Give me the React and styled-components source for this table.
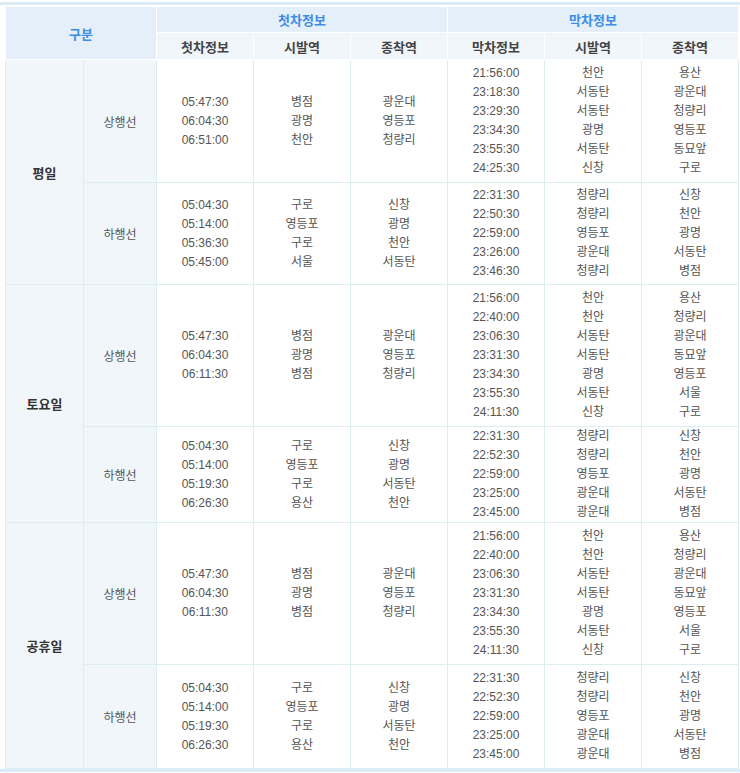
import React from 'react'
import styled, { createGlobalStyle } from 'styled-components'

const GlobalStyle = createGlobalStyle`
  html, body {
    margin: 0;
    padding: 0;
    background: #ffffff;
  }
  body {
    font-family: 'Liberation Sans', 'Noto Sans CJK KR', sans-serif;
    font-size: 12px;
    color: #555555;
  }
`

const Frame = styled.div`
  width: 740px;
  margin-top: 2px;
  border-top: 3px solid #dcebf8;
  border-bottom: 3px solid #dcebf8;
  padding: 1px 1px 0 5px;
  box-sizing: border-box;
`

const Table = styled.table`
  width: 734px;
  border-collapse: collapse;
  table-layout: fixed;
`

const Col = styled.col`
  width: ${props => props.$w}px;
`

const GroupHead = styled.th`
  height: 25px;
  padding: 0;
  border: 1px solid #ffffff;
  background: #e4effa;
  color: #3d8de4;
  font-size: 13px;
  font-weight: bold;
  text-align: center;
`

const SubHead = styled.th`
  height: 26px;
  padding: 0;
  border: 1px solid #ffffff;
  background: #f1f6fa;
  color: #444444;
  font-size: 13px;
  font-weight: bold;
  text-align: center;
`

const DayCell = styled.td`
  padding: 0;
  border: 1px solid #dceef0;
  background: #f0f6fa;
  color: #333333;
  font-size: 13px;
  font-weight: bold;
  text-align: center;
  vertical-align: middle;
`

const DirCell = styled.td`
  height: ${props => props.$h}px;
  padding: 0;
  border: 1px solid #dceef0;
  background: #f0f6fa;
  color: #555555;
  text-align: center;
  vertical-align: middle;
`

const DataCell = styled.td`
  padding: 0;
  border: 1px solid #dceef0;
  background: #ffffff;
  color: #555555;
  text-align: center;
  vertical-align: middle;
  line-height: 19px;
`

const Line = styled.div`
  height: 19px;
  white-space: nowrap;
`

const columnWidths = [78, 73, 97, 97, 97, 97, 97, 97]

const weekdayUpLast = [
  ['21:56:00', '천안', '용산'],
  ['23:18:30', '서동탄', '광운대'],
  ['23:29:30', '서동탄', '청량리'],
  ['23:34:30', '광명', '영등포'],
  ['23:55:30', '서동탄', '동묘앞'],
  ['24:25:30', '신창', '구로']
]

const holidayUpLast = [
  ['21:56:00', '천안', '용산'],
  ['22:40:00', '천안', '청량리'],
  ['23:06:30', '서동탄', '광운대'],
  ['23:31:30', '서동탄', '동묘앞'],
  ['23:34:30', '광명', '영등포'],
  ['23:55:30', '서동탄', '서울'],
  ['24:11:30', '신창', '구로']
]

const upFirst = [
  ['05:47:30', '병점', '광운대'],
  ['06:04:30', '광명', '영등포'],
  ['06:11:30', '병점', '청량리']
]

const downFirst = [
  ['05:04:30', '구로', '신창'],
  ['05:14:00', '영등포', '광명'],
  ['05:19:30', '구로', '서동탄'],
  ['06:26:30', '용산', '천안']
]

const downLast = [
  ['22:31:30', '청량리', '신창'],
  ['22:52:30', '청량리', '천안'],
  ['22:59:00', '영등포', '광명'],
  ['23:25:00', '광운대', '서동탄'],
  ['23:45:00', '광운대', '병점']
]

const schedule = [
  {
    day: '평일',
    rows: [
      {
        dir: '상행선',
        h: 122,
        first: [
          ['05:47:30', '병점', '광운대'],
          ['06:04:30', '광명', '영등포'],
          ['06:51:00', '천안', '청량리']
        ],
        last: weekdayUpLast
      },
      {
        dir: '하행선',
        h: 101,
        first: [
          ['05:04:30', '구로', '신창'],
          ['05:14:00', '영등포', '광명'],
          ['05:36:30', '구로', '천안'],
          ['05:45:00', '서울', '서동탄']
        ],
        last: [
          ['22:31:30', '청량리', '신창'],
          ['22:50:30', '청량리', '천안'],
          ['22:59:00', '영등포', '광명'],
          ['23:26:00', '광운대', '서동탄'],
          ['23:46:30', '청량리', '병점']
        ]
      }
    ]
  },
  {
    day: '토요일',
    rows: [
      { dir: '상행선', h: 141, first: upFirst, last: holidayUpLast },
      { dir: '하행선', h: 94, first: downFirst, last: downLast }
    ]
  },
  {
    day: '공휴일',
    rows: [
      { dir: '상행선', h: 141, first: upFirst, last: holidayUpLast },
      { dir: '하행선', h: 103, first: downFirst, last: downLast }
    ]
  }
]

const Lines = ({ items, col }) => (
  <DataCell>
    {items.map((item, i) => <Line key={i}>{item[col]}</Line>)}
  </DataCell>
)

export default function App () {
  return (
    <>
      <GlobalStyle />
      <Frame>
        <Table>
          <colgroup>
            {columnWidths.map((w, i) => <Col key={i} $w={w} />)}
          </colgroup>
          <thead>
            <tr>
              <GroupHead colSpan={2} rowSpan={2}>구분</GroupHead>
              <GroupHead colSpan={3}>첫차정보</GroupHead>
              <GroupHead colSpan={3}>막차정보</GroupHead>
            </tr>
            <tr>
              <SubHead>첫차정보</SubHead>
              <SubHead>시발역</SubHead>
              <SubHead>종착역</SubHead>
              <SubHead>막차정보</SubHead>
              <SubHead>시발역</SubHead>
              <SubHead>종착역</SubHead>
            </tr>
          </thead>
          <tbody>
            {schedule.map(group => group.rows.map((row, i) => (
              <tr key={group.day + row.dir}>
                {i === 0 && <DayCell rowSpan={group.rows.length}>{group.day}</DayCell>}
                <DirCell $h={row.h}>{row.dir}</DirCell>
                <Lines items={row.first} col={0} />
                <Lines items={row.first} col={1} />
                <Lines items={row.first} col={2} />
                <Lines items={row.last} col={0} />
                <Lines items={row.last} col={1} />
                <Lines items={row.last} col={2} />
              </tr>
            )))}
          </tbody>
        </Table>
      </Frame>
    </>
  )
}
